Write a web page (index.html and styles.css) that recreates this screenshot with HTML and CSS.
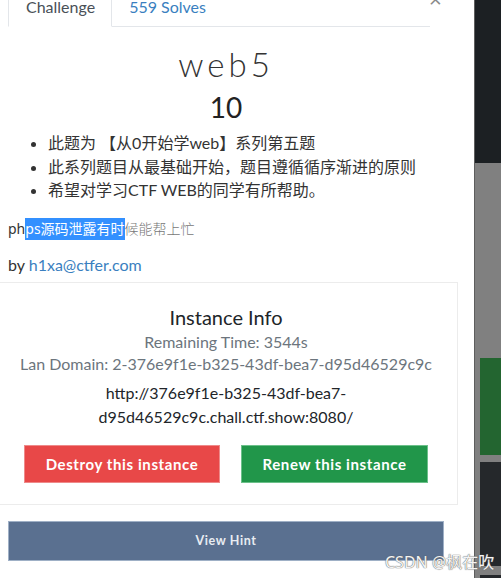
FILE: index.html
```html
<!DOCTYPE html>
<html>
<head>
<meta charset="utf-8">
<link rel="stylesheet" href="styles.css">
</head>
<body>
<div class="page">
  <div class="modal">
    <div class="tabs">
      <div class="tab active">Challenge</div>
      <div class="tab link">559 Solves</div>
      <div class="tab-fill"></div>
      <div class="close">×</div>
    </div>
    <div class="body">
      <h2 class="title">web5</h2>
      <h3 class="value">10</h3>
      <ul class="desc">
        <li>此题为 【从0开始学web】系列第五题</li>
        <li>此系列题目从最基础开始，题目遵循循序渐进的原则</li>
        <li>希望对学习CTF WEB的同学有所帮助。</li>
      </ul>
      <p class="hint-text">ph<span class="sel">ps源码泄露有时</span><span class="rest">候能帮上忙</span></p>
      <p class="author">by <a class="mail">h1xa@ctfer.com</a></p>
      <div class="instance">
        <h4 class="inst-title">Instance Info</h4>
        <div class="muted">Remaining Time: 3544s</div>
        <div class="muted">Lan Domain: 2-376e9f1e-b325-43df-bea7-d95d46529c9c</div>
        <div class="url">http://376e9f1e-b325-43df-bea7-<br>d95d46529c9c.chall.ctf.show:8080/</div>
        <div class="actions">
          <button class="btn destroy">Destroy this instance</button>
          <button class="btn renew">Renew this instance</button>
        </div>
      </div>
      <button class="hint-btn">View Hint</button>
    </div>
  </div>
  <div class="backdrop">
    <div class="bd-top"></div>
    <div class="bd-rest">
      <div class="bd-green"></div>
      <div class="bd-dark"></div>
      <div class="bd-dark2"></div>
    </div>
  </div>
  <div class="watermark">CSDN @枫在吹</div>
</div>
</body>
</html>
```
FILE: styles.css
```css
* { box-sizing: border-box; }
html, body { margin: 0; padding: 0; }
body {
  font-family: Lato, "Noto Sans CJK SC", sans-serif;
  color: #212529;
  background: #808080;
}
.page {
  position: relative;
  display: flex;
  width: 501px;
  height: 578px;
  overflow: hidden;
}
.modal {
  width: 474px;
  height: 578px;
  background: #fff;
  flex: none;
}
.tabs {
  display: flex;
  align-items: flex-end;
  height: 27px;
  margin: 0 44px 0 8px;
  position: relative;
}
.tab {
  font-size: 16px;
  height: 39px;
  margin-top: -12px;
  padding: 7px 16px 0 17px;
  line-height: 24px;
  white-space: nowrap;
  border-bottom: 1px solid #e3e6ea;
  flex: none;
}
.tab.active {
  color: #495057;
  border: 1px solid #e3e6ea;
  border-bottom-color: #fff;
  border-top: none;
}
.tab.link {
  color: #3a7fc0;
  padding-left: 17px;
}
.tab-fill {
  flex: 1;
  height: 1px;
  background: #e3e6ea;
}
.close {
  position: absolute;
  left: 421px;
  top: -15px;
  font-size: 22px;
  color: #8a8a8a;
}
.body {
  padding: 0 30px 0 8px;
}
.title {
  margin: 18px 0 0;
  text-align: center;
  font-family: Lato, sans-serif;
  font-weight: 300;
  font-size: 33px;
  letter-spacing: 4px;
  line-height: 38px;
  color: #333;
}
.value {
  margin: 6px 0 0;
  text-align: center;
  font-weight: 400;
  font-size: 28px;
  line-height: 36px;
  color: #222;
}
.desc {
  margin: 6px 0 0;
  padding-left: 40px;
  font-size: 16px;
  line-height: 23.5px;
  color: #333;
}
.hint-text {
  margin: 16px 0 0;
  font-family: "Noto Sans", "Noto Sans CJK SC", sans-serif;
  font-size: 14px;
  line-height: 22px;
  color: #333;
}
.sel {
  background: #3390ff;
  color: #fff;
  padding: 1px 0 2px;
}
.rest {
  color: #777;
  font-weight: 300;
}
.author {
  margin: 14px 0 0;
  font-size: 16px;
  line-height: 22px;
  color: #333;
}
.mail { color: #3a7fc0; }
.instance {
  margin: 6px -14px 0;
  border: 1px solid #ececec;
  padding: 21px 0 21px;
  text-align: center;
}
.inst-title {
  margin: 0 0 1px;
  font-weight: 400;
  font-size: 20px;
  line-height: 26px;
  color: #212529;
}
.muted {
  color: #6c757d;
  font-size: 16px;
  line-height: 22px;
  font-weight: 400;
}
.url {
  margin-top: 6px;
  font-size: 16px;
  line-height: 24px;
  color: #212529;
}
.actions {
  display: flex;
  justify-content: center;
  gap: 21px;
  margin-top: 16px;
}
.btn {
  border: 1px solid transparent;
  font-family: Lato, sans-serif;
  font-weight: 700;
  font-size: 15px;
  letter-spacing: 0.6px;
  color: #fff;
  height: 38px;
  padding: 0 10px;
  border-radius: 0;
}
.destroy { background: #e84848; border-color: #ee8a8a; width: 196px; }
.renew { background: #21964a; border-color: #6cc08a; width: 187px; }
.hint-btn {
  display: block;
  margin-top: 16px;
  width: 436px;
  height: 40px;
  background: #5a7090;
  border: 1px solid #9fb0c6;
  color: #e8ecf2;
  font-family: Lato, sans-serif;
  font-weight: 700;
  font-size: 12.5px;
  letter-spacing: 0.6px;
}
.backdrop {
  flex: 1;
  display: flex;
  flex-direction: column;
  border-left: 1px solid #5e5e5e;
}
.bd-top {
  height: 163px;
  background: #1c2023;
  flex: none;
}
.bd-rest {
  flex: 1;
  display: flex;
  flex-direction: column;
  padding: 195px 0 0 5px;
  gap: 7px;
  background: #808080;
}
.bd-green { height: 97px; background: #236530; flex: none; }
.bd-dark { height: 104px; background: #25282b; flex: none; }
.bd-dark2 { flex: 1; background: #25282b; margin-top: 2px; }
.watermark {
  position: absolute;
  left: 385px;
  top: 549px;
  font-family: "Noto Sans", "Noto Sans CJK SC", sans-serif;
  font-size: 16px;
  color: #f4f4f4;
  text-shadow: 0 0 1px #666, 0 0 1px #666;
}
```
